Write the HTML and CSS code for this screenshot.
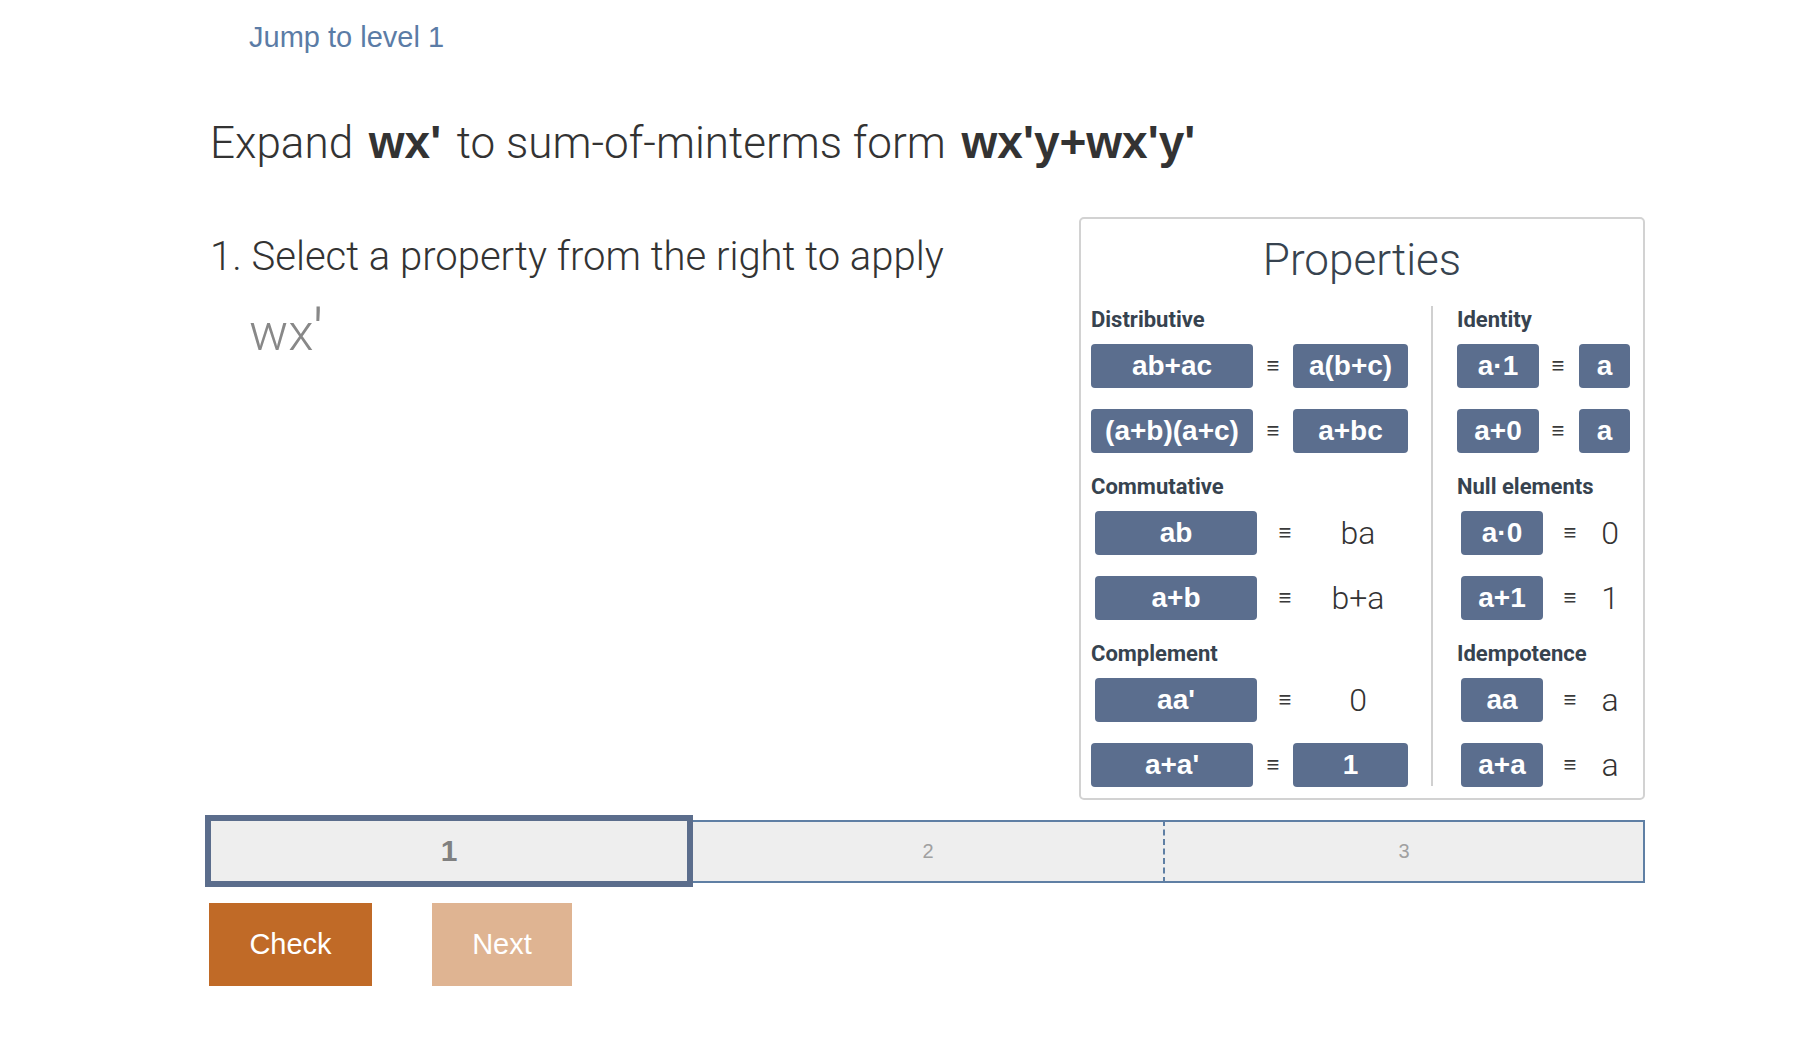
FILE: index.html
```html
<!DOCTYPE html>
<html lang="en">
<head>
<meta charset="utf-8">
<title>Expand to sum-of-minterms</title>
<link rel="stylesheet" href="styles.css">
</head>
<body>
<div class="page">
  <a class="jump" href="#">Jump to level 1</a>
  <h1 class="prompt">Expand <b class="expr">wx'</b> to sum-of-minterms form <b class="expr">wx'y+wx'y'</b></h1>

  <div class="main">
    <div class="work">
      <div class="step">1. Select a property from the right to apply</div>
      <div class="current">wx<span class="prime">'</span></div>
    </div>

    <div class="props">
      <div class="props-title">Properties</div>
      <div class="props-cols">
        <div class="col col-l">
          <div class="group-title">Distributive</div>
          <div class="rule pair"><span class="btn b1">ab+ac</span><span class="eq">&#8801;</span><span class="btn b2">a(b+c)</span></div>
          <div class="rule pair"><span class="btn b1">(a+b)(a+c)</span><span class="eq">&#8801;</span><span class="btn b2">a+bc</span></div>

          <div class="group-title">Commutative</div>
          <div class="rule val"><span class="btn b1">ab</span><span class="eq">&#8801;</span><span class="v">ba</span></div>
          <div class="rule val"><span class="btn b1">a+b</span><span class="eq">&#8801;</span><span class="v">b+a</span></div>

          <div class="group-title">Complement</div>
          <div class="rule val"><span class="btn b1">aa'</span><span class="eq">&#8801;</span><span class="v">0</span></div>
          <div class="rule pair"><span class="btn b1">a+a'</span><span class="eq">&#8801;</span><span class="btn b2">1</span></div>
        </div>

        <div class="divider"></div>

        <div class="col col-r">
          <div class="group-title">Identity</div>
          <div class="rule pair"><span class="btn b1">a&#183;1</span><span class="eq">&#8801;</span><span class="btn b2">a</span></div>
          <div class="rule pair"><span class="btn b1">a+0</span><span class="eq">&#8801;</span><span class="btn b2">a</span></div>

          <div class="group-title">Null elements</div>
          <div class="rule val"><span class="btn b1">a&#183;0</span><span class="eq">&#8801;</span><span class="v">0</span></div>
          <div class="rule val"><span class="btn b1">a+1</span><span class="eq">&#8801;</span><span class="v">1</span></div>

          <div class="group-title">Idempotence</div>
          <div class="rule val"><span class="btn b1">aa</span><span class="eq">&#8801;</span><span class="v">a</span></div>
          <div class="rule val"><span class="btn b1">a+a</span><span class="eq">&#8801;</span><span class="v">a</span></div>
        </div>
      </div>
    </div>
  </div>

  <div class="levels">
    <div class="level level-current">1</div>
    <div class="level level-2">2</div>
    <div class="level level-3">3</div>
  </div>

  <div class="actions">
    <button class="action check">Check</button>
    <button class="action next">Next</button>
  </div>
</div>
</body>
</html>
```

FILE: styles.css
```css
html, body {
  margin: 0;
  padding: 0;
  background: #ffffff;
}

body {
  font-family: Roboto, "Liberation Sans", sans-serif;
  color: #333333;
}

.page {
  width: 1440px;
  margin-left: 205px;
  display: flex;
  flex-direction: column;
}

.jump {
  display: block;
  margin-top: 23px;
  padding-left: 44px;
  font-family: "Liberation Sans", Arial, sans-serif;
  font-size: 29px;
  line-height: 28px;
  color: #5b7ca6;
  text-decoration: none;
}

.prompt {
  margin: 68px 0 0 5px;
  font-family: Roboto, sans-serif;
  font-weight: 300;
  font-size: 44px;
  line-height: 46px;
  color: #333333;
  white-space: nowrap;
}

.expr {
  font-family: "Liberation Sans", Arial, sans-serif;
  font-weight: 700;
  font-size: 46px;
  color: #333333;
  margin: 0 5px;
}

.main {
  display: flex;
  margin-top: 51px;
}

.work {
  width: 872px;
  padding-left: 5px;
}

.step {
  margin-top: 20px;
  font-weight: 300;
  font-size: 40px;
  line-height: 40px;
  color: #333333;
  white-space: nowrap;
}

.current {
  margin-top: 31px;
  padding-left: 39px;
  font-weight: 300;
  font-size: 52px;
  line-height: 50px;
  color: #888888;
}

.prime {
  font-size: 66px;
  line-height: 0;
  vertical-align: -7px;
  margin-left: -1px;
}

.props {
  width: 553px;
  border: 2px solid #d2d2d2;
  border-radius: 5px;
  padding: 18px 0 11px 10px;
  box-sizing: content-box;
}

.props-title {
  text-align: center;
  font-weight: 300;
  font-size: 44px;
  line-height: 46px;
  color: #37434f;
  padding-right: 10px;
}

.props-cols {
  display: flex;
  margin-top: 23px;
}

.col {
  padding-top: 1px;
}

.col-l {
  width: 335px;
}

.divider {
  width: 2px;
  background: #d0d0d0;
  margin: 0 24px 1px 5px;
}

.group-title {
  font-family: Roboto, sans-serif;
  font-weight: 700;
  font-size: 22px;
  line-height: 26px;
  color: #37434f;
  margin-bottom: 11px;
  white-space: nowrap;
}

.rule {
  display: flex;
  align-items: center;
  height: 44px;
  margin-bottom: 21px;
}

.col > .rule:last-child {
  margin-bottom: 0;
}

.btn {
  display: block;
  height: 44px;
  line-height: 44px;
  border-radius: 4px;
  background: #5b6e8e;
  color: #ffffff;
  text-align: center;
  font-family: "Liberation Sans", Arial, sans-serif;
  font-weight: 700;
  font-size: 28px;
  white-space: nowrap;
  cursor: pointer;
}

.eq {
  display: block;
  width: 14px;
  text-align: center;
  font-family: "Liberation Sans", "DejaVu Sans", sans-serif;
  font-size: 22px;
  line-height: 44px;
  color: #3a3a3a;
}

.v {
  display: block;
  text-align: center;
  font-weight: 300;
  font-size: 32px;
  line-height: 44px;
  color: #333333;
}

/* left column sizes */
.col-l .b1 { width: 162px; }
.col-l .b2 { width: 115px; }
.col-l .pair .eq { margin: 0 13px; }
.col-l .val { padding-left: 4px; }
.col-l .val .eq { margin-left: 21px; }
.col-l .val .v { width: 132px; }

/* right column sizes */
.col-r .b1 { width: 82px; }
.col-r .b2 { width: 51px; }
.col-r .pair .eq { margin: 0 14px 0 12px; }
.col-r .val { padding-left: 4px; }
.col-r .val .eq { margin-left: 20px; }
.col-r .val .v { width: 66px; }

/* level progress */
.levels {
  display: flex;
  align-items: center;
  height: 72px;
  margin-top: 15px;
}

.level {
  box-sizing: border-box;
  display: flex;
  align-items: center;
  justify-content: center;
  background: #eeeeee;
  font-family: "Liberation Sans", Arial, sans-serif;
}

.level-current {
  width: 488px;
  height: 72px;
  border: 6px solid #5b6d8c;
  font-weight: 700;
  font-size: 30px;
  color: #808080;
}

.level-2,
.level-3 {
  height: 63px;
  border-top: 2px solid #5f7fa4;
  border-bottom: 2px solid #5f7fa4;
  font-size: 20px;
  color: #a0a0a0;
}

.level-2 {
  width: 470px;
}

.level-3 {
  flex: 1;
  border-left: 2px dashed #5f7fa4;
  border-right: 2px solid #5f7fa4;
}

/* actions */
.actions {
  display: flex;
  gap: 60px;
  margin-top: 16px;
  padding-left: 4px;
}

.action {
  height: 83px;
  border: none;
  border-radius: 0;
  padding: 0;
  font-family: "Liberation Sans", Arial, sans-serif;
  font-size: 29px;
  color: #ffffff;
  cursor: pointer;
}

.check {
  width: 163px;
  background: #c06a27;
}

.next {
  width: 140px;
  background: #dfb492;
}
```
